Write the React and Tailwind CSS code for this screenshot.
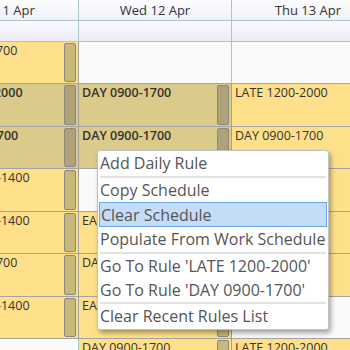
import React from 'react'

const DAY = 'DAY 0900-1700'
const LATE = 'LATE 1200-2000'
const EARLY = 'EARLY 0600-1400'

const rows = [
  { h: 'h-[42px]', cells: [{ t: DAY, k: 'y' }, { k: 'e' }, { k: 'e' }] },
  { h: 'h-[43px]', cells: [{ t: LATE, k: 's' }, { t: DAY, k: 's' }, { t: LATE, k: 'y' }] },
  { h: 'h-[42px]', cells: [{ t: DAY, k: 's' }, { t: DAY, k: 's' }, { t: DAY, k: 'y' }] },
  { h: 'h-[43px]', cells: [{ t: EARLY, k: 'y' }, { k: 'e' }, { t: DAY, k: 'y' }] },
  { h: 'h-[42px]', cells: [{ t: EARLY, k: 'y' }, { t: EARLY, k: 'y' }, { t: LATE, k: 'y' }] },
  { h: 'h-[43px]', cells: [{ t: DAY, k: 'y' }, { t: DAY, k: 'y' }, { t: DAY, k: 'y' }] },
  { h: 'h-[42px]', cells: [{ t: EARLY, k: 'y' }, { t: EARLY, k: 'y' }, { k: 'e' }] },
  { h: 'h-[42px]', cells: [{ k: 'e' }, { t: DAY, k: 'y' }, { t: LATE, k: 'y' }] },
]

const cellStyle = {
  e: 'bg-[#fafafa] border-r-[#a9c5c6] border-b-[#a3a3a3]',
  y: 'bg-[#ffe08a] border-r-[#a0a0a0] border-b-[#a3a3a3]',
  s: 'bg-[#dbcb8b] border-r-[#a0a0a0] border-b-[#a3a3a3] font-semibold',
}

const handleStyle = {
  y: 'bg-[#c9b87e]',
  s: 'bg-[#aea27b]',
}

const days = ['Tue 11 Apr', 'Wed 12 Apr', 'Thu 13 Apr']

const menu = [
  { label: 'Add Daily Rule', h: 'h-[25px]', sep: true },
  { label: 'Copy Schedule', h: 'h-[24px]' },
  { label: 'Clear Schedule', h: 'h-[25px]', active: true },
  { label: 'Populate From Work Schedule', h: 'h-[25px]', sep: true },
  { label: "Go To Rule 'LATE 1200-2000'", h: 'h-[24px]' },
  { label: "Go To Rule 'DAY 0900-1700'", h: 'h-[24px]', sep: true },
  { label: 'Clear Recent Rules List', h: 'h-[25px]' },
]

function Cell({ cell, h }) {
  return (
    <div className={`w-[153px] shrink-0 flex border-r border-b ${h} ${cellStyle[cell.k]}`}>
      <div className="flex-1 pl-[3px] pt-[1px] text-[12.5px] leading-[16px] text-[#333] whitespace-nowrap overflow-hidden">
        {cell.t}
      </div>
      {cell.t && (
        <div className={`w-[12px] my-[1px] mr-[2px] rounded-[2px] border border-[#8d8878] ${handleStyle[cell.k]}`} />
      )}
    </div>
  )
}

export default function App() {
  return (
    <div className="relative w-[350px] h-[350px] overflow-hidden bg-white font-['Open_Sans',sans-serif]">
      <div className="-ml-[74px] w-[459px]">
        <div className="flex">
          {days.map((d) => (
            <div
              key={d}
              className="w-[153px] shrink-0 h-[21px] border-r border-b border-[#a9c5c6] bg-gradient-to-b from-[#fdfdff] to-[#f0f0fa] text-center text-[13px] leading-[20px] text-[#333]"
            >
              {d}
            </div>
          ))}
        </div>
        <div className="flex">
          {days.map((d) => (
            <div
              key={d}
              className="w-[153px] shrink-0 h-[21px] border-r border-b border-[#a9c5c6] bg-gradient-to-b from-[#f9f9fe] to-[#ececf7]"
            />
          ))}
        </div>
        {rows.map((r, i) => (
          <div key={i} className="flex">
            {r.cells.map((c, j) => (
              <Cell key={j} cell={c} h={r.h} />
            ))}
          </div>
        ))}
      </div>

      <div className="absolute left-[97px] top-[150px] w-[232px] bg-white border border-[#c2c2c2] rounded-[3px] shadow-[2px_3px_5px_rgba(0,0,0,0.35)] text-[16px] text-[#555]">
        {menu.map((m) => (
          <React.Fragment key={m.label}>
            <div
              className={`mx-[1px] ${m.h} leading-[24px] pl-[1px] whitespace-nowrap ${
                m.active ? 'bg-[#c5dcf7] border border-[#6aa6ec] pl-0' : ''
              }`}
            >
              {m.label}
            </div>
            {m.sep && <div className="mx-[2px] h-[2px] bg-[#e2e2e2]" />}
          </React.Fragment>
        ))}
      </div>
    </div>
  )
}
